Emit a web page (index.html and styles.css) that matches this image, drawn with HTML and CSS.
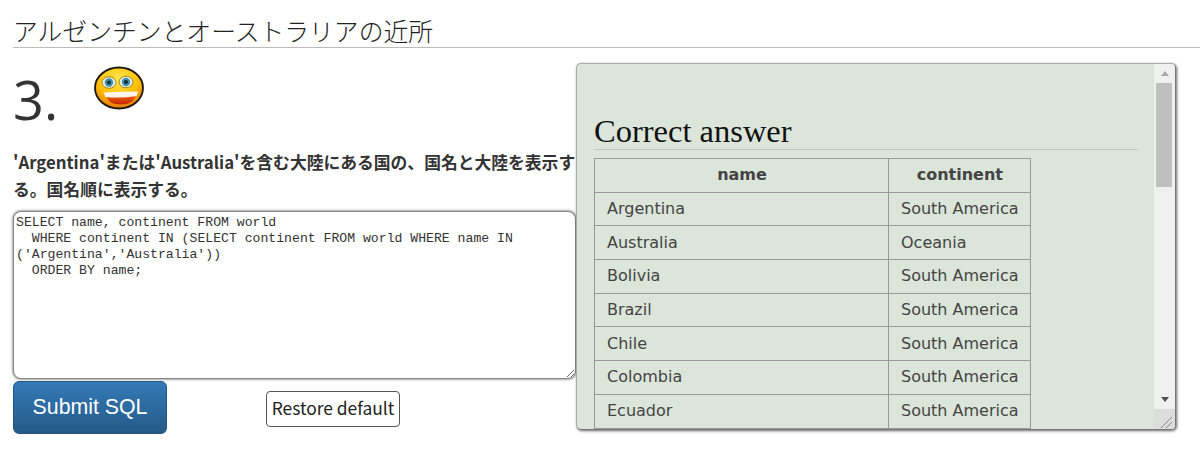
FILE: index.html
```html
<!DOCTYPE html>
<html lang="ja">
<head>
    <meta charset="utf-8">
    <title>アルゼンチンとオーストラリアの近所</title>
    <link rel="stylesheet" href="styles.css">
</head>
<body>
    <h2 class="page-title">アルゼンチンとオーストラリアの近所</h2>

    <div class="quiz">
        <div class="question">
            <div class="question-head">
                <span class="number">3.</span>
                <svg class="smiley" width="52" height="46" viewBox="0 0 52 46">
                    <defs>
                        <radialGradient id="face" cx="48%" cy="28%" r="78%">
                            <stop offset="0" stop-color="#ffe84f"/>
                            <stop offset="0.55" stop-color="#fdc005"/>
                            <stop offset="1" stop-color="#e06c00"/>
                        </radialGradient>
                        <linearGradient id="mouth" x1="0" y1="0" x2="0" y2="1">
                            <stop offset="0" stop-color="#f26a0c"/>
                            <stop offset="1" stop-color="#bf2404"/>
                        </linearGradient>
                    </defs>
                    <ellipse cx="26" cy="23" rx="24" ry="20.5" fill="url(#face)" stroke="#1d1704" stroke-width="1.8"/>
                    <ellipse cx="16" cy="17.5" rx="7" ry="5.8" fill="#e6ecec" stroke="#a9820f"/>
                    <ellipse cx="33" cy="17" rx="7" ry="5.8" fill="#e6ecec" stroke="#a9820f"/>
                    <circle cx="16" cy="17.5" r="4.2" fill="#3f8fa8"/>
                    <circle cx="33" cy="17" r="4.2" fill="#3f8fa8"/>
                    <circle cx="16" cy="17.5" r="2" fill="#12303c"/>
                    <circle cx="33" cy="17" r="2" fill="#12303c"/>
                    <path d="M13 30 Q28 32 43 29.5 Q41 39.5 28 39.5 Q15 39.5 13 30 Z" fill="url(#mouth)"/>
                    <path d="M10.5 27.5 Q28 26.5 45.5 26.5 L43.5 31 Q28 33.5 12.5 32 Z" fill="#fbf5ec"/>
                </svg>
            </div>
            <p class="prompt">'Argentina'または'Australia'を含む大陸にある国の、国名と大陸を表示する。国名順に表示する。</p>
            <textarea class="sql" spellcheck="false">SELECT name, continent FROM world
  WHERE continent IN (SELECT continent FROM world WHERE name IN ('Argentina','Australia'))
  ORDER BY name;</textarea>
            <div class="buttons">
                <button class="submit">Submit SQL</button>
                <button class="restore">Restore default</button>
            </div>
        </div>

        <div class="answer">
            <div class="answer-body">
                <h2 class="answer-title">Correct answer</h2>
                <table>
                    <tr><th>name</th><th>continent</th></tr>
                    <tr><td>Argentina</td><td>South America</td></tr>
                    <tr><td>Australia</td><td>Oceania</td></tr>
                    <tr><td>Bolivia</td><td>South America</td></tr>
                    <tr><td>Brazil</td><td>South America</td></tr>
                    <tr><td>Chile</td><td>South America</td></tr>
                    <tr><td>Colombia</td><td>South America</td></tr>
                    <tr><td>Ecuador</td><td>South America</td></tr>
                </table>
            </div>
            <div class="scrollbar">
                <div class="scroll-btn"><span class="arrow-up"></span></div>
                <div class="scroll-thumb"></div>
                <div class="scroll-track"></div>
                <div class="scroll-btn"><span class="arrow-down"></span></div>
                <div class="scroll-corner">
                    <svg width="20" height="20" viewBox="0 0 20 20">
                        <path d="M7 19 L18 8 M12 19 L18 13" stroke="#8a8a8a" fill="none"/>
                    </svg>
                </div>
            </div>
        </div>
    </div>
</body>
</html>
```

FILE: styles.css
```css
html, body {
    margin: 0;
    height: 461px;
    overflow: hidden;
    background: white;
}
body {
    padding-left: 13px;
    font-family: "DejaVu Sans", "Noto Sans CJK JP", sans-serif;
    color: #222;
}
.page-title {
    margin: 0;
    height: 48px;
    box-sizing: border-box;
    padding-top: 14px;
    border-bottom: 1px solid #bbb;
    font-family: "Noto Sans CJK JP", sans-serif;
    font-size: 24.8px;
    line-height: 32px;
    font-weight: 300;
    color: #222;
}
.quiz {
    display: flex;
    align-items: flex-start;
}
.question {
    width: 563px;
    flex: none;
}
.question-head {
    display: flex;
    height: 99px;
}
.number {
    margin-top: 16px;
    font-size: 54px;
    line-height: 70px;
    font-family: "Open Sans", sans-serif;
    color: #333;
}
.smiley {
    margin: 17px 0 0 35px;
}
.prompt {
    margin: 2px 0 0;
    height: 62px;
    font-family: "Noto Sans CJK JP", sans-serif;
    font-size: 16.8px;
    line-height: 27px;
    font-weight: bold;
    color: #333;
}
.sql {
    display: block;
    box-sizing: border-box;
    width: 563px;
    height: 168px;
    padding: 3px 2px;
    border: 1px solid #888;
    border-radius: 8px;
    box-shadow: 0 0 3px rgba(0,0,0,0.7);
    font-family: "Liberation Mono", monospace;
    font-size: 13.15px;
    line-height: 16px;
    color: #333;
    outline: none;
}
.buttons {
    display: flex;
    align-items: flex-start;
    margin-top: 2px;
}
.submit {
    width: 154px;
    height: 53px;
    border: 1px solid #245580;
    border-radius: 6px;
    background: linear-gradient(#337ab7, #265a88);
    color: white;
    font-family: "Liberation Sans", Arial, sans-serif;
    font-size: 21.3px;
}
.restore {
    width: 134px;
    height: 36px;
    margin: 10px 0 0 99px;
    padding: 0 0 4px;
    border: 1px solid #555;
    border-radius: 4px;
    background: white;
    color: #222;
    font-family: "Noto Sans CJK JP", sans-serif;
    font-size: 17.4px;
}
.answer {
    display: flex;
    box-sizing: border-box;
    width: 600px;
    height: 367px;
    flex: none;
    margin-top: 15px;
    overflow: hidden;
    background: #dbe5da;
    border: 1px solid #aaa;
    border-right-color: #777;
    border-bottom-color: #777;
    border-radius: 5px;
    box-shadow: 1px 1px 3px rgba(0,0,0,0.6);
}
.answer-body {
    flex: 1;
    min-width: 0;
    padding: 0 16px 0 17px;
}
.answer-title {
    margin: 49px 0 8px;
    border-bottom: 1px solid #bcc6bc;
    font-family: "Liberation Serif", serif;
    font-size: 32.5px;
    line-height: 36px;
    font-weight: normal;
    color: #111;
}
table {
    border-collapse: collapse;
    font-size: 16px;
    color: #444;
}
th, td {
    height: 33.7px;
    padding: 0 11px 1px 12px;
    border: 1px solid #999;
    text-align: left;
    white-space: nowrap;
    box-sizing: border-box;
}
th {
    text-align: center;
}
tr > :first-child {
    width: 294px;
}
.scrollbar {
    display: flex;
    flex-direction: column;
    width: 21px;
    flex: none;
    background: #f0f0f0;
}
.scroll-btn {
    display: flex;
    align-items: center;
    justify-content: center;
    height: 19px;
    flex: none;
}
.arrow-up {
    border: 4px solid transparent;
    border-top: 0;
    border-bottom: 5px solid #a8a8a8;
}
.arrow-down {
    border: 4px solid transparent;
    border-bottom: 0;
    border-top: 5px solid #505050;
}
.scroll-thumb {
    height: 104px;
    flex: none;
    margin: 0 3px 0 2px;
    background: #bfbfbf;
}
.scroll-track {
    flex: 1;
}
.scroll-corner {
    height: 20px;
    flex: none;
    background: #dcdcdc;
}
.scroll-corner svg {
    display: block;
}
```
